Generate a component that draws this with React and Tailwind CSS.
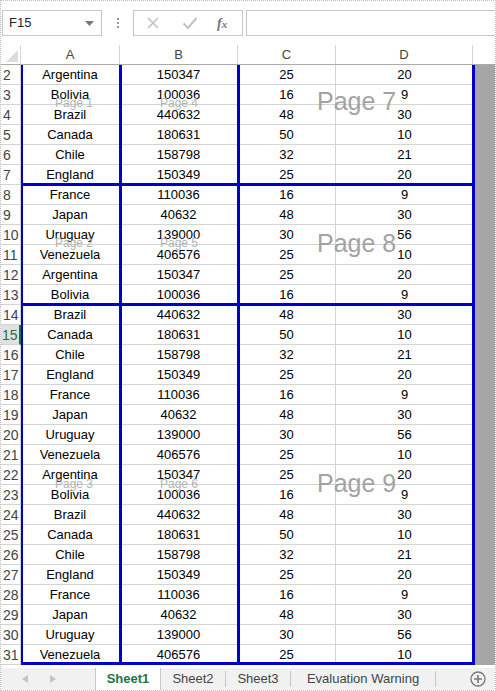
import React from "react";

const base = [
  ["Argentina", "150347", "25", "20"],
  ["Bolivia", "100036", "16", "9"],
  ["Brazil", "440632", "48", "30"],
  ["Canada", "180631", "50", "10"],
  ["Chile", "158798", "32", "21"],
  ["England", "150349", "25", "20"],
  ["France", "110036", "16", "9"],
  ["Japan", "40632", "48", "30"],
  ["Uruguay", "139000", "30", "56"],
  ["Venezuela", "406576", "25", "10"],
];

const rows = [...base, ...base, ...base].map((r, i) => ({ n: i + 2, cells: r }));

const FONT = { fontFamily: '"Liberation Sans", Arial, sans-serif' };

const Toolbar = () => (
  <div className="h-[44px] flex items-start pt-[9px] shrink-0">
    {/* name box */}
    <div className="ml-[1px] w-[100px] h-[26px] border border-[#c6c6c6] flex items-center justify-between px-[6px]">
      <span className="text-[13px] text-[#222]">F15</span>
      <svg width="9" height="5" viewBox="0 0 9 5" className="mr-[1px]">
        <path d="M0 0 L9 0 L4.5 5 Z" fill="#777" />
      </svg>
    </div>
    <div className="w-[31px] h-[26px] flex flex-col items-center justify-center gap-[2px]">
      <span className="w-[2px] h-[2px] bg-[#999]" />
      <span className="w-[2px] h-[2px] bg-[#999]" />
      <span className="w-[2px] h-[2px] bg-[#999]" />
    </div>
    {/* cancel / enter / fx */}
    <div className="w-[110px] h-[26px] border border-[#c6c6c6] flex items-center">
      <svg width="14" height="14" viewBox="0 0 14 14" className="ml-[12px]">
        <path d="M2 2 L12 12 M12 2 L2 12" stroke="#c2c2c2" strokeWidth="1.6" />
      </svg>
      <svg width="16" height="14" viewBox="0 0 16 14" className="ml-[22px]">
        <path d="M1.5 7.5 L6 12 L14.5 2" stroke="#c2c2c2" strokeWidth="2" fill="none" />
      </svg>
      <span
        className="ml-[19px] text-[14px] italic font-bold text-[#777]"
        style={{ fontFamily: '"Liberation Serif", serif' }}
      >
        f<span className="text-[11px]">x</span>
      </span>
    </div>
    <div className="ml-[3px] flex-1 h-[26px] border border-[#c6c6c6] border-r-0" />
  </div>
);

const HeaderRow = () => (
  <div className="h-[20px] flex border-b border-[#ababab] shrink-0 text-[13px] text-[#444]">
    <div className="w-[20px] border-r border-[#d4d4d4] flex items-end justify-end pb-[2px] pr-[2px]">
      <svg width="12" height="12" viewBox="0 0 12 12">
        <path d="M12 0 L12 12 L0 12 Z" fill="#dcdcdc" />
      </svg>
    </div>
    <div className="w-[99px] border-r border-[#d4d4d4] flex items-center justify-center pt-px">A</div>
    <div className="w-[118px] border-r border-[#d4d4d4] flex items-center justify-center pt-px">B</div>
    <div className="w-[98px] border-r border-[#d4d4d4] flex items-center justify-center pt-px">C</div>
    <div className="w-[137px] border-r border-[#d4d4d4] flex items-center justify-center pt-px">D</div>
    <div className="flex-1" />
  </div>
);

const Row = ({ n, cells }) => {
  const sel = n === 15;
  return (
    <div className="h-[20px] flex text-[13px] text-black">
      <div
        className={
          sel
            ? "w-[20px] bg-[#e1e1e1] border-r-2 border-[#217346] border-b border-b-[#d4d4d4] text-[#217346] text-[14px] pl-[1px] pt-px flex items-center"
            : "w-[20px] border-r border-b border-[#d4d4d4] text-[#444] text-[14px] pl-[2px] pt-px flex items-center"
        }
      >
        {n}
      </div>
      <div className="w-[99px] border-r border-b border-[#d4d4d4] flex items-center justify-center pt-px">{cells[0]}</div>
      <div className="w-[118px] border-r border-b border-[#d4d4d4] flex items-center justify-center pt-px">{cells[1]}</div>
      <div className="w-[98px] border-r border-b border-[#d4d4d4] flex items-center justify-center pt-px">{cells[2]}</div>
      <div className="w-[137px] border-b border-[#d4d4d4] flex items-center justify-center pt-px">{cells[3]}</div>
      <div className="flex-1 bg-[#a6a6a6]" />
    </div>
  );
};

const small = "absolute text-[12px] text-[#b3b3b3] leading-none";
const big = "absolute text-[25px] text-[#9a9a9a] leading-none opacity-90";

const Body = () => (
  <div className="relative h-[600px] shrink-0">
    {rows.map((r) => (
      <Row key={r.n} n={r.n} cells={r.cells} />
    ))}
    {/* page break lines */}
    <div className="absolute left-[20px] top-0 w-[2px] h-[600px] bg-[#0000cc]" />
    <div className="absolute left-[118px] top-0 w-[3px] h-[600px] bg-[#0000cc]" />
    <div className="absolute left-[236px] top-0 w-[3px] h-[600px] bg-[#0000cc]" />
    <div className="absolute left-[471px] top-0 w-[3px] h-[600px] bg-[#0000cc]" />
    <div className="absolute left-[20px] top-[118px] w-[454px] h-[3px] bg-[#0000cc]" />
    <div className="absolute left-[20px] top-[238px] w-[454px] h-[3px] bg-[#0000cc]" />
    <div className="absolute left-[20px] top-[597px] w-[454px] h-[3px] bg-[#0000cc]" />
    {/* page watermarks */}
    <span className={small} style={{ left: 54, top: 32 }}>Page 1</span>
    <span className={small} style={{ left: 159, top: 32 }}>Page 4</span>
    <span className={small} style={{ left: 54, top: 172 }}>Page 2</span>
    <span className={small} style={{ left: 159, top: 172 }}>Page 5</span>
    <span className={small} style={{ left: 54, top: 413 }}>Page 3</span>
    <span className={small} style={{ left: 159, top: 413 }}>Page 6</span>
    <span className={big} style={{ left: 316, top: 24 }}>Page 7</span>
    <span className={big} style={{ left: 316, top: 166 }}>Page 8</span>
    <span className={big} style={{ left: 316, top: 406 }}>Page 9</span>
  </div>
);

const TabBar = () => (
  <div className="h-[22px] mt-[3px] flex items-stretch bg-[#f1f1f1] text-[13px] text-[#444] shrink-0">
    <div className="w-[94px] flex items-center">
      <svg width="6" height="8" viewBox="0 0 6 8" className="ml-[21px]">
        <path d="M6 0 L6 8 L0 4 Z" fill="#c4c4c4" />
      </svg>
      <svg width="6" height="8" viewBox="0 0 6 8" className="ml-[22px]">
        <path d="M0 0 L0 8 L6 4 Z" fill="#c4c4c4" />
      </svg>
    </div>
    <div className="w-[66px] bg-white border-l border-r border-[#c6c6c6] flex items-center justify-center font-bold text-[#217346]">
      Sheet1
    </div>
    <div className="w-[65px] border-r border-[#c6c6c6] my-[3px] flex items-center justify-center">Sheet2</div>
    <div className="w-[65px] border-r border-[#c6c6c6] my-[3px] flex items-center justify-center">Sheet3</div>
    <div className="w-[145px] border-r border-[#c6c6c6] my-[3px] flex items-center justify-center">Evaluation Warning</div>
    <div className="flex-1 flex items-center justify-end pr-[9px]">
      <svg width="16" height="16" viewBox="0 0 16 16">
        <circle cx="8" cy="8" r="7" stroke="#777" strokeWidth="1.3" fill="none" />
        <path d="M8 4 L8 12 M4 8 L12 8" stroke="#777" strokeWidth="1.6" />
      </svg>
    </div>
  </div>
);

export default function App() {
  return (
    <div
      className="w-[496px] h-[691px] border border-dotted border-[#bdbdbd] bg-white flex flex-col overflow-hidden"
      style={FONT}
    >
      <Toolbar />
      <HeaderRow />
      <Body />
      <TabBar />
    </div>
  );
}
